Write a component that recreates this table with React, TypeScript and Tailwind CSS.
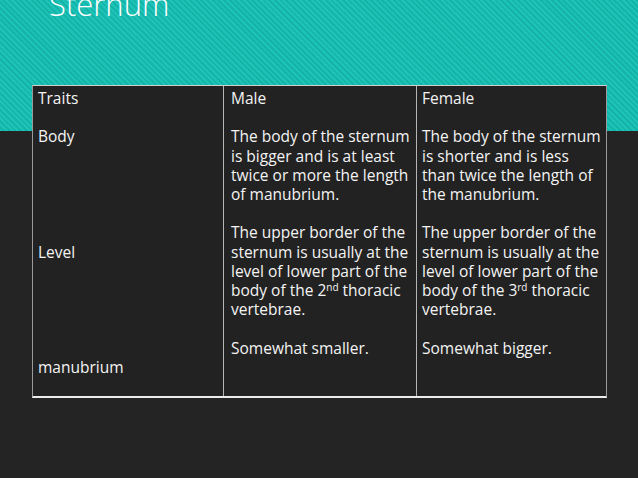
import React from "react";

const font = { fontFamily: '"Open Sans", "Noto Sans", sans-serif' };

// each block: [number of empty lines before it, content]
type Block = [number, React.ReactNode];

const traits: Block[] = [
  [0, "Traits"],
  [1, "Body"],
  [5, "Level"],
  [5, "manubrium"],
];

const male: Block[] = [
  [0, "Male"],
  [
    1,
    <>
      The body of the sternum
      <br />
      is bigger and is at least
      <br />
      twice or more the length
      <br />
      of manubrium.
    </>,
  ],
  [
    1,
    <>
      The upper border of the
      <br />
      sternum is usually at the
      <br />
      level of lower part of the
      <br />
      body of the 2<sup className="text-[10px] leading-none">nd</sup> thoracic
      <br />
      vertebrae.
    </>,
  ],
  [1, "Somewhat smaller."],
];

const female: Block[] = [
  [0, "Female"],
  [
    1,
    <>
      The body of the sternum
      <br />
      is shorter and is less
      <br />
      than twice the length of
      <br />
      the manubrium.
    </>,
  ],
  [
    1,
    <>
      The upper border of the
      <br />
      sternum is usually at the
      <br />
      level of lower part of the
      <br />
      body of the 3<sup className="text-[10px] leading-none">rd</sup> thoracic
      <br />
      vertebrae.
    </>,
  ],
  [1, "Somewhat bigger."],
];

function Column({ blocks, className }: { blocks: Block[]; className: string }) {
  return (
    <div className={className}>
      {blocks.map(([gap, content], i) => (
        <p
          key={i}
          className="whitespace-nowrap leading-[19.2px]"
          style={{ marginTop: gap * 19.2 }}
        >
          {content}
        </p>
      ))}
    </div>
  );
}

export default function App() {
  return (
    <div
      className="flex h-[478px] w-full flex-col overflow-hidden bg-[#242424] bg-[image:repeating-linear-gradient(45deg,#1cc4b7_0px,#1cc4b7_2px,#16b3a8_2px,#16b3a8_4px)] bg-[length:100%_131px] bg-no-repeat px-[32px]"
      style={font}
    >
      <div className="flex h-[85px] shrink-0 flex-col">
        <div className="-mt-[11px] pl-[17px] text-[31px] font-light leading-none text-white">
          Sternum
        </div>
      </div>
      <div className="flex h-[313px] w-[575px] shrink-0 border-x border-t border-b-2 border-x-[#9a9a9a] border-t-[#cfcfcf] border-b-[#ececec] bg-[#222222] text-[15.5px] text-[#f4f4f4]">
        <Column blocks={traits} className="w-[190px] pl-[5px] pt-[3px]" />
        <Column blocks={male} className="w-[193px] border-l border-[#b5b5b5] pl-[7px] pt-[3px]" />
        <Column blocks={female} className="flex-1 border-l border-[#b5b5b5] pl-[5px] pt-[3px]" />
      </div>
    </div>
  );
}
